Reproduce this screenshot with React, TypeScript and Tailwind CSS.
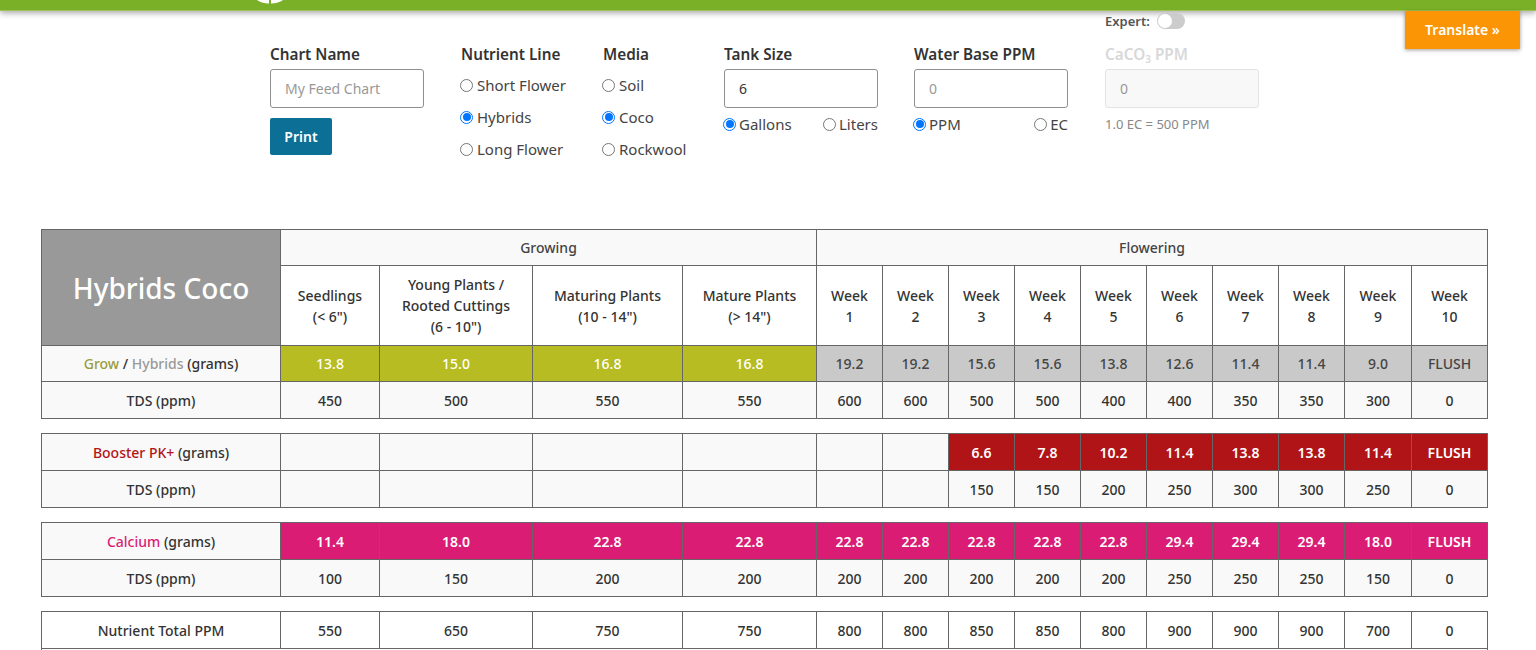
import type { ReactNode } from "react";

const font = "font-['Noto_Sans','Open_Sans',sans-serif]";

const cellBase = "border border-[#666] text-center align-middle text-[14px] font-medium leading-[21px] p-0";

const colWidths = [239, 99, 153, 150, 134, 66, 66, 66, 66, 66, 66, 66, 66, 67, 76];

function Cols() {
  return (
    <colgroup>
      {colWidths.map((w, i) => (
        <col key={i} style={{ width: w }} />
      ))}
    </colgroup>
  );
}

function Row({
  label,
  values,
  offset = 0,
  color,
  rowClass = "h-[37px]",
}: {
  label: ReactNode;
  values: string[];
  offset?: number;
  color?: (i: number) => string;
  rowClass?: string;
}) {
  return (
    <tr className={rowClass}>
      <td className={`${cellBase} bg-[#f9f9f9] text-[#333]`}>{label}</td>
      {Array.from({ length: offset }).map((_, i) => (
        <td key={i} className={`${cellBase} bg-[#f9f9f9]`} />
      ))}
      {values.map((v, i) => (
        <td key={i} className={`${cellBase} ${color ? color(i) : "bg-[#f9f9f9] text-[#333]"}`}>
          {v}
        </td>
      ))}
    </tr>
  );
}

function Radio({ label, checked, tight }: { label: string; checked?: boolean; tight?: boolean }) {
  return (
    <label
      className={`flex items-center text-[15px] leading-[22px] text-[#444] ${
        tight ? "-ml-[1px] gap-[3px]" : "-ml-[1px] gap-[4px]"
      }`}
    >
      <span
        className={`flex h-[13px] w-[13px] items-center justify-center rounded-full border bg-white ${
          checked ? "border-[#0075ff]" : "border-[#767676]"
        }`}
      >
        {checked && <span className="h-[8px] w-[8px] rounded-full bg-[#0075ff]" />}
      </span>
      {label}
    </label>
  );
}

function Field({ value, placeholder, disabled }: { value?: string; placeholder?: string; disabled?: boolean }) {
  return (
    <div
      className={`flex h-[39px] w-[154px] items-center rounded-[3px] border px-[14px] text-[14px] ${
        disabled ? "border-[#e3e3e3] bg-[#f8f8f8]" : "border-[#8f8f8f] bg-white"
      } ${value ? "text-[#333]" : "text-[#999]"}`}
    >
      {value ?? placeholder}
    </div>
  );
}

const FieldLabel = ({ children, className = "mb-[4px] text-[#333]" }: { children: ReactNode; className?: string }) => (
  <div className={`text-[15.3px] font-semibold leading-[22px] ${className}`}>{children}</div>
);

export default function App() {
  const lime = () => "bg-[#b6bc22] text-white";
  const grey = () => "bg-[#c9c9c9] text-[#444]";
  const red = () => "bg-[#b11416] text-white font-semibold";
  const pink = () => "bg-[#da1c75] text-white font-semibold";

  return (
    <div className={`relative h-[650px] overflow-hidden bg-white ${font}`}>
      <header className="relative box-border h-[11px] overflow-hidden border-b border-[#9dc35a] bg-[#7ab027] shadow-[0_2px_6px_rgba(0,0,0,0.35)]">
        <svg className="absolute left-[257px] top-0" width="26" height="4" viewBox="0 0 26 4">
          <path d="M0 0Q5 3.6 12 3.4V0ZM26 0Q21 3.6 14 3.4V0Z" fill="#fff" />
        </svg>
      </header>

      <button className="absolute right-[16px] top-[11px] h-[38px] w-[115px] bg-[#fb9506] pb-[2px] text-[14px] font-semibold text-white shadow-[0_1px_4px_rgba(0,0,0,0.4)]">
        Translate »
      </button>

      <div className="ml-[270px] flex pt-[32px]">
        <div className="w-[191px]">
          <FieldLabel>Chart Name</FieldLabel>
          <Field placeholder="My Feed Chart" />
          <button className="mt-[10px] h-[37px] w-[62px] rounded-[2px] bg-[#0c7096] text-[14px] font-semibold text-white">
            Print
          </button>
        </div>
        <div className="w-[142px]">
          <FieldLabel className="mb-[9px] text-[#333]">Nutrient Line</FieldLabel>
          <div className="flex flex-col gap-[10px]">
            <Radio label="Short Flower" />
            <Radio label="Hybrids" checked />
            <Radio label="Long Flower" />
          </div>
        </div>
        <div className="w-[121px]">
          <FieldLabel className="mb-[9px] text-[#333]">Media</FieldLabel>
          <div className="flex flex-col gap-[10px]">
            <Radio label="Soil" />
            <Radio label="Coco" checked />
            <Radio label="Rockwool" />
          </div>
        </div>
        <div className="w-[190px]">
          <FieldLabel>Tank Size</FieldLabel>
          <Field value="6" />
          <div className="mt-[5px] flex w-[154px] justify-between">
            <Radio label="Gallons" checked tight />
            <Radio label="Liters" tight />
          </div>
        </div>
        <div className="w-[191px]">
          <FieldLabel>Water Base PPM</FieldLabel>
          <Field placeholder="0" />
          <div className="mt-[5px] flex w-[154px] justify-between">
            <Radio label="PPM" checked tight />
            <Radio label="EC" tight />
          </div>
        </div>
        <div className="relative w-[154px]">
          <div className="absolute -top-[31px] left-0 flex items-center gap-[7px] text-[13px] font-semibold leading-[18px] text-[#555]">
            Expert:
            <span className="flex h-[16px] w-[28px] items-center rounded-full bg-[#ccc] pl-[1px]">
              <span className="h-[14px] w-[14px] rounded-full bg-white" />
            </span>
          </div>
          <FieldLabel className="mb-[4px] text-[#d8d8d8]">
            CaCO<sub className="text-[10px]">3</sub> PPM
          </FieldLabel>
          <Field placeholder="0" disabled />
          <div className="mt-[7px] text-[13px] leading-[18px] text-[#888]">1.0 EC = 500 PPM</div>
        </div>
      </div>

      <div className="mx-[41px] mt-[69px] w-[1447px]">
        <table className="w-full table-fixed border-collapse">
          <Cols />
          <tbody>
            <tr className="h-[36px]">
              <td rowSpan={2} className={`${cellBase} bg-[#999] !text-[28px] !leading-[36px] text-white`}>
                Hybrids Coco
              </td>
              <td colSpan={4} className={`${cellBase} bg-[#f9f9f9] text-[#444]`}>
                Growing
              </td>
              <td colSpan={10} className={`${cellBase} bg-[#f9f9f9] text-[#444]`}>
                Flowering
              </td>
            </tr>
            <tr className="h-[80px] text-[#333]">
              <td className={cellBase}>Seedlings<br />(&lt; 6")</td>
              <td className={cellBase}>Young Plants /<br />Rooted Cuttings<br />(6 - 10")</td>
              <td className={cellBase}>Maturing Plants<br />(10 - 14")</td>
              <td className={cellBase}>Mature Plants<br />(&gt; 14")</td>
              {[1, 2, 3, 4, 5, 6, 7, 8, 9, 10].map((w) => (
                <td key={w} className={cellBase}>Week<br />{w}</td>
              ))}
            </tr>
            <Row
              rowClass="h-[36px]"
              label={
                <>
                  <span className="text-[#9a9c3c]">Grow</span> / <span className="text-[#999]">Hybrids</span> (grams)
                </>
              }
              values={["13.8", "15.0", "16.8", "16.8", "19.2", "19.2", "15.6", "15.6", "13.8", "12.6", "11.4", "11.4", "9.0", "FLUSH"]}
              color={(i) => (i < 4 ? lime() : grey())}
            />
            <Row label="TDS (ppm)" values={["450", "500", "550", "550", "600", "600", "500", "500", "400", "400", "350", "350", "300", "0"]} />
          </tbody>
        </table>

        <table className="mt-[14px] w-full table-fixed border-collapse">
          <Cols />
          <tbody>
            <Row
              label={
                <>
                  <span className="text-[#b11416]">Booster PK+</span> (grams)
                </>
              }
              offset={6}
              values={["6.6", "7.8", "10.2", "11.4", "13.8", "13.8", "11.4", "FLUSH"]}
              color={red}
            />
            <Row label="TDS (ppm)" offset={6} values={["150", "150", "200", "250", "300", "300", "250", "0"]} />
          </tbody>
        </table>

        <table className="mt-[14px] w-full table-fixed border-collapse">
          <Cols />
          <tbody>
            <Row
              label={
                <>
                  <span className="text-[#da1c75]">Calcium</span> (grams)
                </>
              }
              values={["11.4", "18.0", "22.8", "22.8", "22.8", "22.8", "22.8", "22.8", "22.8", "29.4", "29.4", "29.4", "18.0", "FLUSH"]}
              color={pink}
            />
            <Row label="TDS (ppm)" values={["100", "150", "200", "200", "200", "200", "200", "200", "200", "250", "250", "250", "150", "0"]} />
          </tbody>
        </table>

        <table className="mt-[14px] w-full table-fixed border-collapse">
          <Cols />
          <tbody>
            <tr className="h-[37px] bg-white text-[#333]">
              <td className={cellBase}>Nutrient Total PPM</td>
              {["550", "650", "750", "750", "800", "800", "850", "850", "800", "900", "900", "900", "700", "0"].map((v, i) => (
                <td key={i} className={cellBase}>{v}</td>
              ))}
            </tr>
            <tr className="h-[37px]">
              <td className={cellBase} colSpan={15} />
            </tr>
          </tbody>
        </table>
      </div>
    </div>
  );
}
